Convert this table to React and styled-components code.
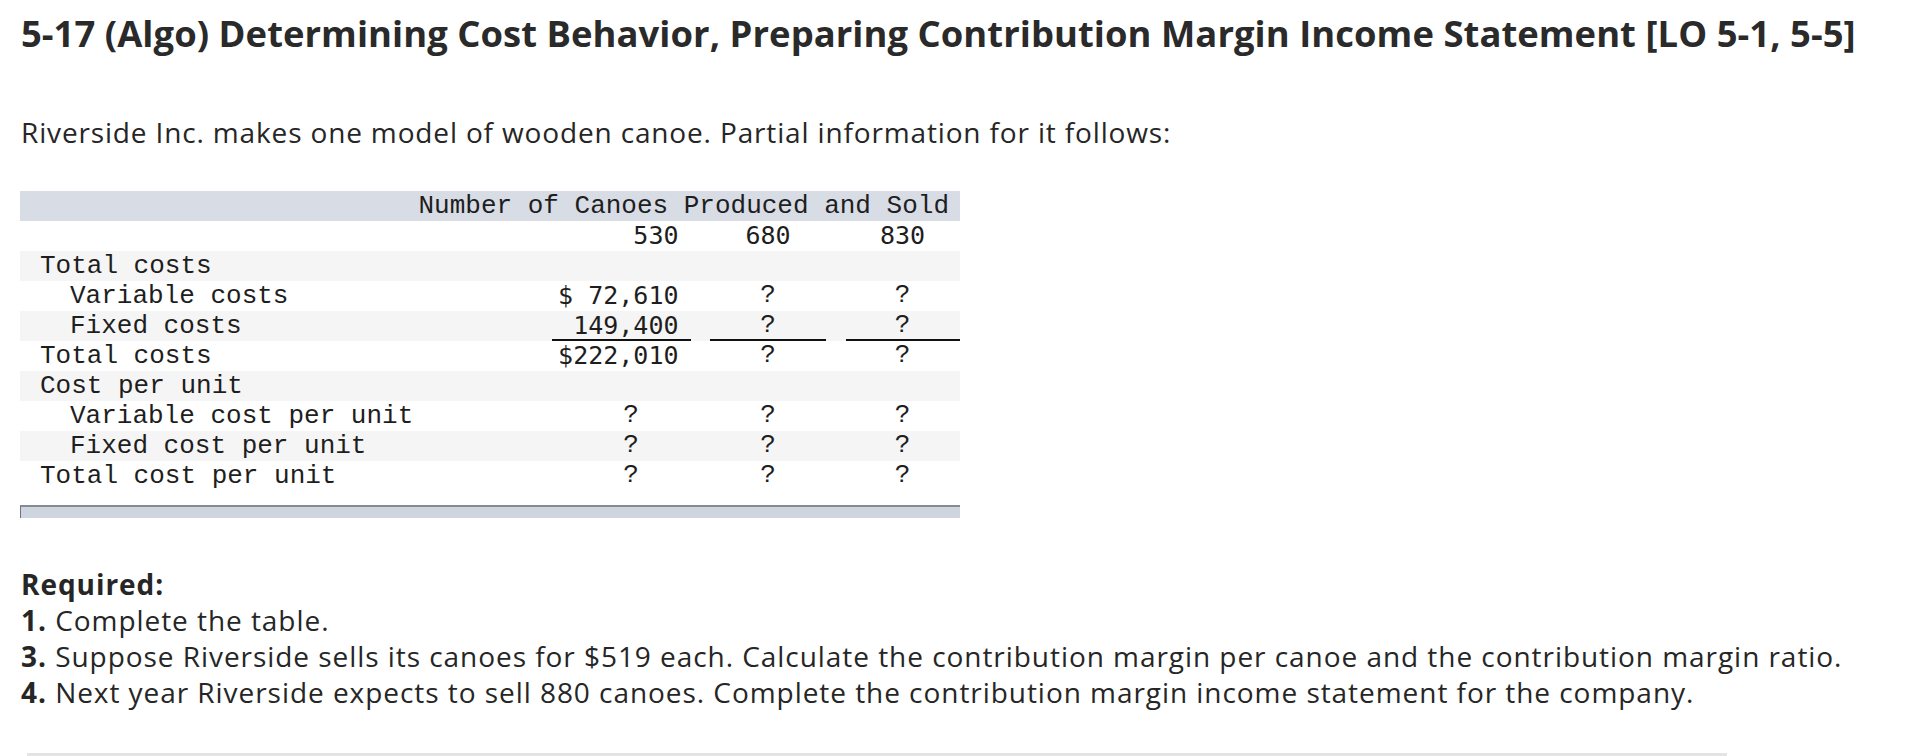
import React from 'react';
import styled, { createGlobalStyle } from 'styled-components';

const GlobalStyle = createGlobalStyle`
  html, body {
    margin: 0;
    padding: 0;
    background: #ffffff;
  }
  body {
    font-family: "Open Sans", Lato, Arial, sans-serif;
    color: #262626;
  }
`;

const Page = styled.div`
  width: 1926px;
  height: 756px;
  box-sizing: border-box;
  padding: 0 20px;
  overflow: hidden;
  display: flex;
  flex-direction: column;
`;

const Title = styled.h2`
  margin: 10px 0 0 1px;
  font-family: "Open Sans", Lato, sans-serif;
  font-weight: 700;
  font-size: 36.4px;
  line-height: 46px;
  letter-spacing: 0.05px;
  color: #2a2a2a;
  white-space: nowrap;
`;

const Intro = styled.p`
  margin: 58px 0 0 1px;
  font-size: 28px;
  line-height: 36px;
  letter-spacing: 0.85px;
  color: #262626;
  white-space: nowrap;
`;

const Table = styled.div`
  width: 940px;
  margin-top: 41px;
  display: flex;
  flex-direction: column;
`;

const HeaderRow = styled.div`
  height: 30px;
  background: #d8dce5;
  display: flex;
  align-items: center;
  justify-content: flex-end;
  padding-right: 11px;
  font-family: "Liberation Mono", "Courier New", monospace;
  font-size: 26px;
  color: #1e1e1e;
  white-space: pre;
`;

const Row = styled.div`
  height: 30px;
  display: grid;
  grid-template-columns: 512px 139px 116px 114px;
  grid-template-rows: 30px;
  column-gap: 19.5px;
  background: ${({ $shade }) => ($shade ? '#f5f5f5' : '#ffffff')};
`;

const Label = styled.div`
  display: flex;
  align-items: center;
  padding-left: ${({ $indent }) => ($indent ? 50 : 20)}px;
  font-family: "Liberation Mono", "Courier New", monospace;
  font-size: 26px;
  line-height: 1;
  color: #1e1e1e;
  white-space: pre;
`;

const Value = styled.div`
  box-sizing: border-box;
  height: 30px;
  display: flex;
  align-items: center;
  justify-content: ${({ $align }) => ($align === 'right' ? 'flex-end' : 'center')};
  padding-right: ${({ $align }) => ($align === 'right' ? 12 : 0)}px;
  padding-left: ${({ $shift }) => ($shift ? 20 : 0)}px;
  font-family: ${({ $mono }) =>
    $mono === 'sans'
      ? '"DejaVu Sans Mono", Menlo, monospace'
      : '"Liberation Mono", "Courier New", monospace'};
  font-size: ${({ $mono }) => ($mono === 'sans' ? 25 : 26)}px;
  line-height: 1;
  color: #1e1e1e;
  white-space: pre;
  border-bottom: 2px solid ${({ $rule }) => ($rule ? '#111111' : 'transparent')};
`;

const FooterBar = styled.div`
  margin-top: 14px;
  height: 11px;
  background: #cfd5df;
  border-top: 2px solid #858b95;
  border-left: 1px solid #6f7580;
`;

const Required = styled.div`
  margin-top: 48px;
  margin-left: 1px;
  font-size: 28px;
  line-height: 36px;
  letter-spacing: 0.95px;
  color: #262626;
`;

const Line = styled.div`
  white-space: nowrap;
  b {
    font-weight: 700;
  }
`;

const Divider = styled.div`
  margin-top: auto;
  margin-left: 7px;
  width: 1700px;
  height: 3px;
  background: #e4e4e4;
`;

const q = { text: '?', mono: 'serif' };

const rows = [
  { label: 'Total costs', shade: true },
  {
    label: 'Variable costs',
    indent: true,
    cells: [{ text: '$ 72,610', mono: 'sans', align: 'right' }, q, q],
  },
  {
    label: 'Fixed costs',
    indent: true,
    shade: true,
    rule: true,
    cells: [{ text: '149,400', mono: 'sans', align: 'right' }, q, q],
  },
  {
    label: 'Total costs',
    cells: [{ text: '$222,010', mono: 'sans', align: 'right' }, q, q],
  },
  { label: 'Cost per unit', shade: true },
  { label: 'Variable cost per unit', indent: true, cells: [{ ...q, shift: true }, q, q] },
  { label: 'Fixed cost per unit', indent: true, shade: true, cells: [{ ...q, shift: true }, q, q] },
  { label: 'Total cost per unit', cells: [{ ...q, shift: true }, q, q] },
];

const units = [
  { text: '530', mono: 'sans', align: 'right' },
  { text: '680', mono: 'sans' },
  { text: '830', mono: 'sans' },
];

const renderCells = (cells, rule) =>
  [0, 1, 2].map((i) => {
    const c = cells ? cells[i] : null;
    return (
      <Value
        key={i}
        $align={c ? c.align : undefined}
        $mono={c ? c.mono : undefined}
        $shift={c ? c.shift : false}
        $rule={!!rule}
      >
        {c ? c.text : ''}
      </Value>
    );
  });

export default function App() {
  return (
    <>
      <GlobalStyle />
      <Page>
        <Title>
          5-17 (Algo) Determining Cost Behavior, Preparing Contribution Margin Income Statement [LO 5-1, 5-5]
        </Title>
        <Intro>
          Riverside Inc. makes one model of wooden canoe. Partial information for it follows:
        </Intro>

        <Table>
          <HeaderRow>Number of Canoes Produced and Sold</HeaderRow>
          <Row>
            <Label />
            {renderCells(units)}
          </Row>
          {rows.map((r, i) => (
            <Row key={i} $shade={r.shade}>
              <Label $indent={r.indent}>{r.label}</Label>
              {renderCells(r.cells, r.rule)}
            </Row>
          ))}
          <FooterBar />
        </Table>

        <Required>
          <Line><b>Required:</b></Line>
          <Line><b>1.</b> Complete the table.</Line>
          <Line>
            <b>3.</b> Suppose Riverside sells its canoes for $519 each. Calculate the contribution margin per canoe and the contribution margin ratio.
          </Line>
          <Line>
            <b>4.</b> Next year Riverside expects to sell 880 canoes. Complete the contribution margin income statement for the company.
          </Line>
        </Required>

        <Divider />
      </Page>
    </>
  );
}
